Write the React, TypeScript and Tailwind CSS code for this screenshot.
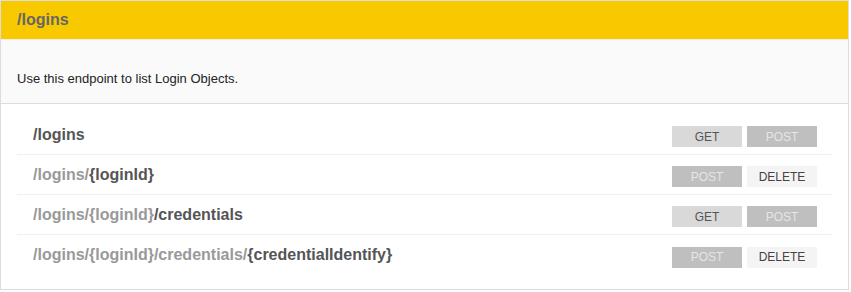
const ROWS: { muted: string; path: string; methods: ('GET' | 'POST' | 'DELETE')[] }[] = [
  { muted: '', path: '/logins', methods: ['GET', 'POST'] },
  { muted: '/logins/', path: '{loginId}', methods: ['POST', 'DELETE'] },
  { muted: '/logins/{loginId}', path: '/credentials', methods: ['GET', 'POST'] },
  { muted: '/logins/{loginId}/credentials/', path: '{credentialIdentify}', methods: ['POST', 'DELETE'] },
];

const METHOD_STYLES: Record<string, string> = {
  GET: 'bg-[#d9d9d9] text-[#555]',
  POST: 'bg-[#bfbfbf] text-[#e6e6e6]',
  DELETE: 'bg-[#f4f4f4] text-[#444]',
};

function Method({ name }: { name: string }) {
  return (
    <span
      className={`flex h-[21px] w-[70px] items-center justify-center text-[12px] ${METHOD_STYLES[name]}`}
    >
      {name}
    </span>
  );
}

export default function App() {
  return (
    <div
      className="w-[849px] bg-white text-[#333]"
      style={{ fontFamily: "'Liberation Sans', Arial, sans-serif" }}
    >
      <div className="border border-[#ddd]">
        <div className="flex h-[39px] items-center border-b border-[#eee] bg-[#f9c900] px-4">
          <h2 className="text-[16px] font-bold text-[#666]">/logins</h2>
        </div>
        <div className="flex h-[64px] items-center border-b border-[#ddd] bg-[#fafafa] px-4 pt-[14px]">
          <p className="text-[13px] text-[#222]">Use this endpoint to list Login Objects.</p>
        </div>
        <div className="px-4 pt-[11px] pb-[14px]">
          {ROWS.map((row, i) => (
            <div
              key={i}
              className={`flex h-[40px] items-center justify-between pl-4 pr-[15px] ${
                i < ROWS.length - 1 ? 'border-b border-[#f0f0f0]' : ''
              }`}
            >
              <span className="text-[16px] font-bold text-[#555]">
                <span className="text-[#999]">{row.muted}</span>
                {row.path}
              </span>
              <div className="mt-[4px] flex gap-[5px]">
                {row.methods.map((m) => (
                  <Method key={m} name={m} />
                ))}
              </div>
            </div>
          ))}
        </div>
      </div>
    </div>
  );
}
